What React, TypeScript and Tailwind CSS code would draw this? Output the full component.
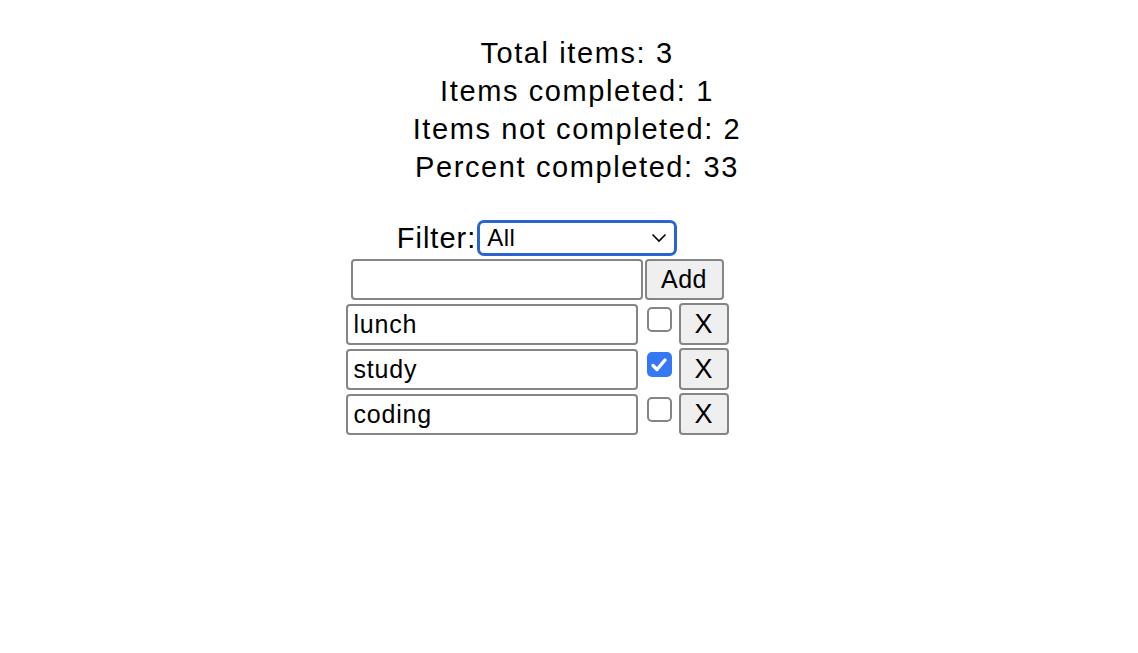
import React, { useState } from 'react';

interface Todo {
  id: number;
  text: string;
  done: boolean;
}

const initialTodos: Todo[] = [
  { id: 1, text: 'lunch', done: false },
  { id: 2, text: 'study', done: true },
  { id: 3, text: 'coding', done: false },
];

const App: React.FC = () => {
  const [todos, setTodos] = useState<Todo[]>(initialTodos);
  const [draft, setDraft] = useState('');
  const [filter, setFilter] = useState('All');

  const completed = todos.filter((t) => t.done).length;
  const total = todos.length;
  const percent = total ? Math.floor((completed / total) * 100) : 0;

  const visible = todos.filter((t) =>
    filter === 'All' ? true : filter === 'Completed' ? t.done : !t.done
  );

  const addTodo = () => {
    if (!draft.trim()) return;
    setTodos([...todos, { id: Date.now(), text: draft, done: false }]);
    setDraft('');
  };

  return (
    <div className="w-full min-h-screen bg-white text-black font-['Liberation_Sans',Arial,sans-serif]">
      <div className="pt-[34px] pl-4 text-center text-[29px] leading-[38px] tracking-[1.6px]">
        <div>Total items: {total}</div>
        <div>Items completed: {completed}</div>
        <div>Items not completed: {total - completed}</div>
        <div>Percent completed: {percent}</div>
      </div>

      <div className="mt-[34px] pr-[64px] flex flex-col items-center">
        {/* filter */}
        <div className="flex items-center h-[36px]">
          <span className="text-[29px] leading-none tracking-[1px] mr-[1px]">Filter:</span>
          <div className="relative">
            <select
              value={filter}
              onChange={(e) => setFilter(e.target.value)}
              className="appearance-none w-[200px] h-[36px] border-[3px] border-[#2b64d1] rounded-[7px] pl-[7px] text-[24px] tracking-[0.5px] leading-none bg-white outline-none"
            >
              <option>All</option>
              <option>Completed</option>
              <option>Not completed</option>
            </select>
            <svg className="absolute right-[10px] top-[13px] w-[16px] h-[10px] pointer-events-none" viewBox="0 0 16 10" fill="none" stroke="black" strokeWidth={1.6}>
              <path d="M1.5 1.5L8 8L14.5 1.5" />
            </svg>
          </div>
        </div>

        {/* add */}
        <div className="flex mt-[3px]">
          <input
            value={draft}
            onChange={(e) => setDraft(e.target.value)}
            className="w-[292px] h-[41px] border-2 border-[#858585] rounded-[4px] px-2 text-[25px] tracking-[0.8px] outline-none"
          />
          <button
            onClick={addTodo}
            className="ml-[2px] w-[79px] h-[41px] bg-[#efefef] border-2 border-[#858585] rounded-[4px] text-[25px] tracking-[0.5px] leading-none"
          >
            Add
          </button>
        </div>

        {/* list */}
        <div className="flex flex-col gap-[3px] mt-[3px]">
          {visible.map((t) => (
            <div key={t.id} className="flex items-start">
              <input
                value={t.text}
                onChange={(e) =>
                  setTodos(todos.map((x) => (x.id === t.id ? { ...x, text: e.target.value } : x)))
                }
                className="mt-[1px] w-[292px] h-[41px] border-2 border-[#858585] rounded-[4px] px-[6px] text-[25px] tracking-[0.8px] outline-none"
              />
              <button
                onClick={() =>
                  setTodos(todos.map((x) => (x.id === t.id ? { ...x, done: !x.done } : x)))
                }
                className={`ml-[9px] mt-[4px] w-[25px] h-[25px] rounded-[5px] flex items-center justify-center ${
                  t.done ? 'bg-[#3478f6]' : 'bg-white border-2 border-[#858585]'
                }`}
              >
                {t.done && (
                  <svg viewBox="0 0 20 20" className="w-[20px] h-[20px]" fill="none" stroke="white" strokeWidth={3.4} strokeLinecap="round" strokeLinejoin="round">
                    <path d="M4 10.5L8 14.5L16 5" />
                  </svg>
                )}
              </button>
              <button
                onClick={() => setTodos(todos.filter((x) => x.id !== t.id))}
                className="ml-[7px] w-[50px] h-[42px] bg-[#efefef] border-2 border-[#858585] rounded-[4px] text-[27px] leading-none"
              >
                X
              </button>
            </div>
          ))}
        </div>
      </div>
    </div>
  );
};

export default App;
